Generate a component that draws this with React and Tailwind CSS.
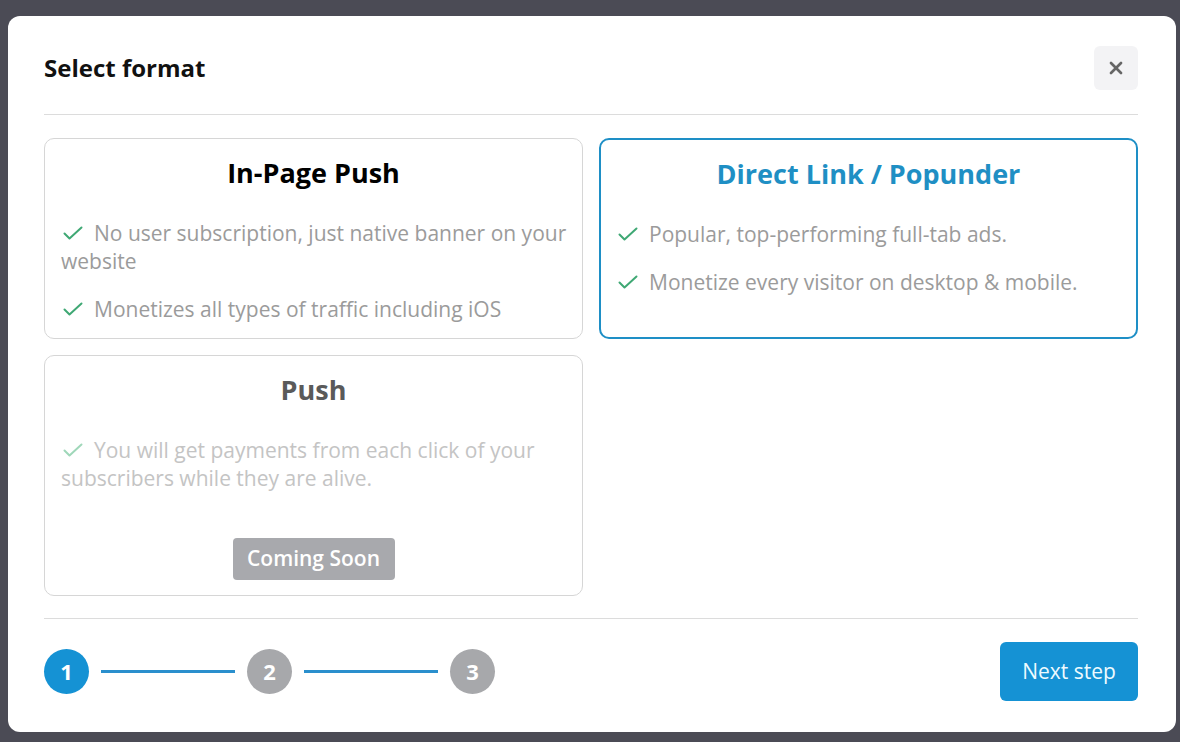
import { X } from "lucide-react";

const CheckMark = ({ faded }) => (
  <svg
    width="20"
    height="14"
    viewBox="0 0 20 14"
    className="inline-block align-[1px] ml-[2px] mr-[11px]"
    fill="none"
    stroke={faded ? "#9fd7b9" : "#3fa874"}
    strokeWidth="2"
    strokeLinecap="round"
    strokeLinejoin="round"
  >
    <path d="M1.5 7.5 L6.5 12.5 L18.5 1.5" />
  </svg>
);

const Bullet = ({ children, faded }) => (
  <p className={`text-[21px] leading-[28px] ${faded ? "text-[#c4c4c4]" : "text-[#9b9b9b]"}`}>
    <CheckMark faded={faded} />
    {children}
  </p>
);

const StepDot = ({ n, active }) => (
  <div
    className={`w-[45px] h-[45px] rounded-full flex items-center justify-center text-white text-[22px] font-bold ${
      active ? "bg-[#1592d4]" : "bg-[#a7a8ab]"
    }`}
  >
    {n}
  </div>
);

const StepLine = () => <div className="w-[134px] h-[3px] bg-[#2a8fcd] mx-3" />;

export default function App() {
  return (
    <div className="w-[1180px] h-[742px] bg-[#4b4b55] pt-4 pl-2 overflow-hidden font-['Open_Sans',sans-serif]">
      <div className="w-[1168px] h-[716px] bg-white rounded-xl pl-9 pr-[38px] flex flex-col">
        <header className="flex items-center justify-between pt-[30px] pb-6 border-b border-[#dcdcdc]">
          <h2 className="text-[24px] leading-[32px] font-bold text-[#111]">Select format</h2>
          <button className="w-11 h-11 rounded-md bg-[#f3f3f5] flex items-center justify-center text-[#666]">
            <X size={20} strokeWidth={3.2} />
          </button>
        </header>

        <div className="grid grid-cols-2 gap-4 pt-[23px] pb-[22px] border-b border-[#dcdcdc]">
          <div className="border border-[#d6d6d6] rounded-[10px] px-4 pt-4 pb-[15px]">
            <h3 className="text-center text-[27px] leading-[36px] font-bold text-black">In-Page Push</h3>
            <div className="mt-7 -mr-1 space-y-5">
              <Bullet>No user subscription, just native banner on your website</Bullet>
              <Bullet>Monetizes all types of traffic including iOS</Bullet>
            </div>
          </div>

          <div className="border-2 border-[#1e8fc6] rounded-[10px] px-[15px] pt-4 pb-[15px]">
            <h3 className="text-center text-[27px] leading-[36px] font-bold text-[#1f8fc4]">Direct Link / Popunder</h3>
            <div className="mt-7 -mr-1 space-y-5">
              <Bullet>Popular, top-performing full-tab ads.</Bullet>
              <Bullet>Monetize every visitor on desktop &amp; mobile.</Bullet>
            </div>
          </div>

          <div className="border border-[#d6d6d6] rounded-[10px] px-4 pt-4 pb-[15px] flex flex-col">
            <h3 className="text-center text-[27px] leading-[36px] font-bold text-[#5a5a5a]">Push</h3>
            <div className="mt-7 -mr-1">
              <Bullet faded>You will get payments from each click of your subscribers while they are alive.</Bullet>
            </div>
            <div className="mt-[46px] flex justify-center">
              <span className="h-[42px] w-[162px] rounded bg-[#a8a9ad] text-white text-[21px] font-semibold flex items-center justify-center">
                Coming Soon
              </span>
            </div>
          </div>
        </div>

        <footer className="flex items-center justify-between pt-[23px]">
          <div className="flex items-center">
            <StepDot n="1" active />
            <StepLine />
            <StepDot n="2" />
            <StepLine />
            <StepDot n="3" />
          </div>
          <button className="w-[138px] h-[59px] rounded-md bg-[#1592d4] text-[#eefbff] text-[21px]">
            Next step
          </button>
        </footer>
      </div>
    </div>
  );
}
